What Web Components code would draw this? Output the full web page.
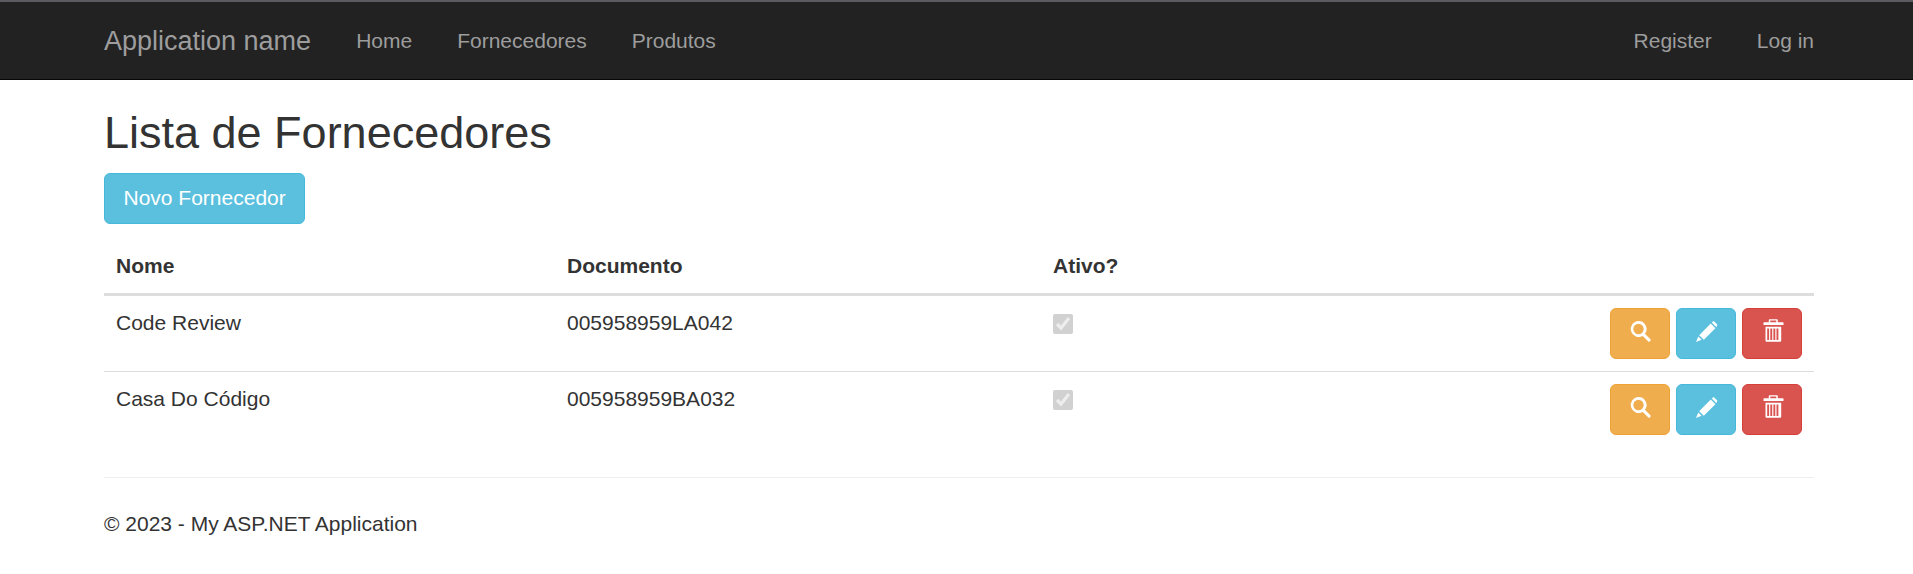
<!DOCTYPE html>
<html lang="pt">
<head>
<meta charset="utf-8">
<title>Lista de Fornecedores</title>
<style>
	html, body { margin: 0; padding: 0; background: #fff; }
	body {
		font-family: "Liberation Sans", Arial, sans-serif;
		font-size: 21px;
		line-height: 30px;
		color: #333;
	}
</style>
</head>
<body>

<app-navbar brand="Application name">
	<nav-link>Home</nav-link>
	<nav-link>Fornecedores</nav-link>
	<nav-link>Produtos</nav-link>
	<nav-link slot="right">Register</nav-link>
	<nav-link slot="right">Log in</nav-link>
</app-navbar>

<page-body>
	<h2 slot="title">Lista de Fornecedores</h2>
	<action-button slot="action" kind="info">Novo Fornecedor</action-button>
	<supplier-table>
		<supplier-row nome="Code Review" documento="005958959LA042"></supplier-row>
		<supplier-row nome="Casa Do Código" documento="005958959BA032"></supplier-row>
	</supplier-table>
	<page-footer>© 2023 - My ASP.NET Application</page-footer>
</page-body>

<script>
const ICONS = {
	search: `<path fill-rule="evenodd" d="M8.500 0a8 8 0 0 1 6.400 12.800l5.500 5.500c.4.400.4 1 0 1.400l-.7.700c-.4.400-1 .4-1.400 0l-5.500-5.500A8 8 0 1 1 8.500 0zm0 2.800a5.200 5.200 0 1 0 0 10.400a5.200 5.200 0 0 0 0-10.400z"/>`,
	pencil: `<path d="M0 21L2.300 15.400L5.600 18.700Z"/>
		<path d="M3.200 14.200L14.800 2.600L19.400 7.200L7.800 18.800Z"/>
		<path d="M15.800 1.600L17 .4q.6-.6 1.200 0L21 3.200q.6.6 0 1.200L20.400 6.200Z"/>`,
	trash: `<path fill-rule="evenodd" d="M7.600-1.700h7.400q.8 0 .8.8V1.300H21q.5 0 .5.5V4H1.500V1.800q0-.5.5-.5H6.800V-.9q0-.8.8-.8zM8.300-.4V1.300h6V-.4z"/>
		<path fill-rule="evenodd" d="M3.500 5.700H19.200V19.700q0 1-1 1H4.500q-1 0-1-1zM5.200 7.500V19H7.100V7.500zM8.300 7.500V19H10.200V7.500zM11.400 7.500V19H13.300V7.500zM14.500 7.500V19H16.400V7.500z"/>`
};

class AppNavbar extends HTMLElement {
	constructor() {
		super();
		this.attachShadow({ mode: "open" }).innerHTML = `
		<style>
			:host {
				display: block;
				box-sizing: border-box;
				height: 80px;
				background: #222;
				border-top: 2px solid #5c5c60;
				border-bottom: 1px solid #080808;
			}
			.bar {
				display: flex;
				height: 100%;
				padding: 0 99px 0 104px;
				align-items: stretch;
			}
			.brand {
				display: flex;
				align-items: center;
				font-size: 27px;
				color: #9d9d9d;
				margin-right: 22px;
			}
			.left, .right { display: flex; gap: 45px; align-items: center; }
			.left { margin-left: 23px; }
			.right { margin-left: auto; }
		</style>
		<div class="bar">
			<div class="brand"></div>
			<div class="left"><slot></slot></div>
			<div class="right"><slot name="right"></slot></div>
		</div>`;
	}
	connectedCallback() {
		this.shadowRoot.querySelector(".brand").textContent = this.getAttribute("brand");
	}
}

class NavLink extends HTMLElement {
	constructor() {
		super();
		this.attachShadow({ mode: "open" }).innerHTML = `
		<style>
			:host { display: block; color: #9d9d9d; font-size: 21px; line-height: 30px; }
		</style>
		<slot></slot>`;
	}
}

class PageBody extends HTMLElement {
	constructor() {
		super();
		this.attachShadow({ mode: "open" }).innerHTML = `
		<style>
			:host { display: block; padding: 0 99px 0 104px; }
			.title { padding-top: 28px; height: 65px; }
			::slotted(h2) {
				margin: 0;
				font-size: 45px;
				font-weight: 400;
				line-height: 49.500px;
				color: #333;
			}
			.action { height: 51px; margin-bottom: 15px; }
		</style>
		<div class="title"><slot name="title"></slot></div>
		<div class="action"><slot name="action"></slot></div>
		<slot></slot>`;
	}
}

class ActionButton extends HTMLElement {
	constructor() {
		super();
		this.attachShadow({ mode: "open" }).innerHTML = `
		<style>
			:host {
				display: inline-flex;
				box-sizing: border-box;
				height: 51px;
				padding: 0 18.500px 1px;
				align-items: center;
				justify-content: center;
				border: 1px solid;
				border-radius: 6px;
				color: #fff;
				font-size: 21px;
				vertical-align: top;
			}
			:host([kind="info"]) { background: #5bc0de; border-color: #46b8da; }
			:host([kind="warning"]) { background: #f0ad4e; border-color: #eea236; }
			:host([kind="danger"]) { background: #d9534f; border-color: #d43f3a; }
		</style>
		<slot></slot>`;
	}
}

class GlyphIcon extends HTMLElement {
	constructor() {
		super();
		this.attachShadow({ mode: "open" }).innerHTML = `
		<style>
			/* glyphs sit a little above the middle of the button */
			:host { display: block; width: 21px; height: 21px; margin-bottom: 4px; }
			svg { display: block; width: 21px; height: 21px; fill: #fff; overflow: visible; }
		</style>
		<svg viewBox="0 0 21 21" aria-hidden="true"></svg>`;
	}
	connectedCallback() {
		this.shadowRoot.querySelector("svg").innerHTML = ICONS[this.getAttribute("name")];
	}
}

class SupplierTable extends HTMLElement {
	constructor() {
		super();
		this.attachShadow({ mode: "open" }).innerHTML = `
		<style>
			:host { display: block; margin-bottom: 30px; }
			.head {
				display: grid;
				grid-template-columns: 451px 486px 1fr;
				height: 54px;
				border-bottom: 3px solid #ddd;
				font-weight: 700;
				line-height: 30px;
				color: #333;
			}
			.head div { padding: 12px; }
		</style>
		<div class="head">
			<div>Nome</div>
			<div>Documento</div>
			<div>Ativo?</div>
		</div>
		<slot></slot>`;
	}
}

class SupplierRow extends HTMLElement {
	constructor() {
		super();
		this.attachShadow({ mode: "open" }).innerHTML = `
		<style>
			:host {
				display: grid;
				grid-template-columns: 451px 486px 1fr auto;
			}
			:host(:not(:first-child)) { border-top: 1px solid #ddd; }
			.cell { padding: 12px; }
			input {
				display: block;
				width: 19.500px;
				height: 19.500px;
				margin: 6px 0 0;
			}
			.actions { display: flex; gap: 6px; }
			action-button { width: 60px; padding: 0; }
		</style>
		<div class="cell nome"></div>
		<div class="cell documento"></div>
		<div class="cell"><input type="checkbox" checked disabled></div>
		<div class="cell actions">
			<action-button kind="warning"><glyph-icon name="search"></glyph-icon></action-button>
			<action-button kind="info"><glyph-icon name="pencil"></glyph-icon></action-button>
			<action-button kind="danger"><glyph-icon name="trash"></glyph-icon></action-button>
		</div>`;
	}
	connectedCallback() {
		this.shadowRoot.querySelector(".nome").textContent = this.getAttribute("nome");
		this.shadowRoot.querySelector(".documento").textContent = this.getAttribute("documento");
	}
}

class PageFooter extends HTMLElement {
	constructor() {
		super();
		this.attachShadow({ mode: "open" }).innerHTML = `
		<style>
			:host { display: block; border-top: 1px solid #eee; padding-top: 31px; }
		</style>
		<slot></slot>`;
	}
}

customElements.define("glyph-icon", GlyphIcon);
customElements.define("action-button", ActionButton);
customElements.define("nav-link", NavLink);
customElements.define("app-navbar", AppNavbar);
customElements.define("page-body", PageBody);
customElements.define("supplier-row", SupplierRow);
customElements.define("supplier-table", SupplierTable);
customElements.define("page-footer", PageFooter);
</script>
</body>
</html>
